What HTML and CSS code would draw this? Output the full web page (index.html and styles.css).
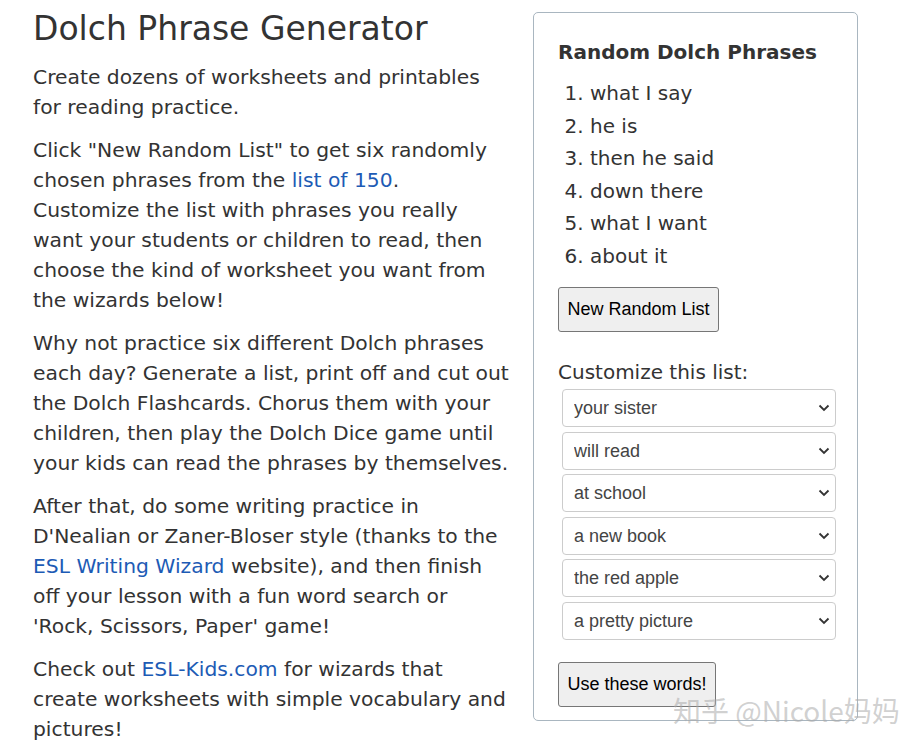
FILE: index.html
```html
<!DOCTYPE html>
<html lang="en">
<head>
<meta charset="utf-8">
<title>Dolch Phrase Generator</title>
<link rel="stylesheet" href="styles.css">
</head>
<body>
<div class="page">
  <div class="main">
    <h1 class="title">Dolch Phrase Generator</h1>
    <p class="para">Create dozens of worksheets and printables for reading practice.</p>
    <p class="para">Click "New Random List" to get six randomly chosen phrases from the <a class="link" href="#">list of 150</a>.<br>Customize the list with phrases you really want your students or children to read, then choose the kind of worksheet you want from the wizards below!</p>
    <p class="para">Why not practice six different Dolch phrases each day? Generate a list, print off and cut out the Dolch Flashcards. Chorus them with your children, then play the Dolch Dice game until your kids can read the phrases by themselves.</p>
    <p class="para">After that, do some writing practice in D'Nealian or Zaner-Bloser style (thanks to the <a class="link" href="#">ESL Writing Wizard</a> website), and then finish off your lesson with a fun word search or 'Rock, Scissors, Paper' game!</p>
    <p class="para">Check out <a class="link" href="#">ESL-Kids.com</a> for wizards that create worksheets with simple vocabulary and pictures!</p>
  </div>
  <div class="sidebar">
    <h2 class="side-title">Random Dolch Phrases</h2>
    <ol class="phrases">
      <li>what I say</li>
      <li>he is</li>
      <li>then he said</li>
      <li>down there</li>
      <li>what I want</li>
      <li>about it</li>
    </ol>
    <button class="btn btn-new" type="button">New Random List</button>
    <div class="custom-label">Customize this list:</div>
    <div class="selects">
      <div class="select-wrap"><select class="sel"><option>your sister</option></select><svg class="chev" width="12" height="8" viewBox="0 0 12 8"><path d="M1.5 1.5 L6 6 L10.5 1.5" fill="none" stroke="#333" stroke-width="1.8"/></svg></div>
      <div class="select-wrap"><select class="sel"><option>will read</option></select><svg class="chev" width="12" height="8" viewBox="0 0 12 8"><path d="M1.5 1.5 L6 6 L10.5 1.5" fill="none" stroke="#333" stroke-width="1.8"/></svg></div>
      <div class="select-wrap"><select class="sel"><option>at school</option></select><svg class="chev" width="12" height="8" viewBox="0 0 12 8"><path d="M1.5 1.5 L6 6 L10.5 1.5" fill="none" stroke="#333" stroke-width="1.8"/></svg></div>
      <div class="select-wrap"><select class="sel"><option>a new book</option></select><svg class="chev" width="12" height="8" viewBox="0 0 12 8"><path d="M1.5 1.5 L6 6 L10.5 1.5" fill="none" stroke="#333" stroke-width="1.8"/></svg></div>
      <div class="select-wrap"><select class="sel"><option>the red apple</option></select><svg class="chev" width="12" height="8" viewBox="0 0 12 8"><path d="M1.5 1.5 L6 6 L10.5 1.5" fill="none" stroke="#333" stroke-width="1.8"/></svg></div>
      <div class="select-wrap"><select class="sel"><option>a pretty picture</option></select><svg class="chev" width="12" height="8" viewBox="0 0 12 8"><path d="M1.5 1.5 L6 6 L10.5 1.5" fill="none" stroke="#333" stroke-width="1.8"/></svg></div>
    </div>
    <button class="btn btn-use" type="button">Use these words!</button>
  </div>
</div>
<div class="watermark">知乎 @Nicole妈妈</div>
</body>
</html>
```

FILE: styles.css
```css
html, body {
  margin: 0;
  padding: 0;
  background: #ffffff;
}
body {
  font-family: "DejaVu Sans", Verdana, sans-serif;
  color: #333333;
  position: relative;
  height: 749px;
  overflow: hidden;
}
.page {
  display: flex;
  align-items: flex-start;
  padding-left: 33px;
  gap: 22px;
}
.main {
  width: 478px;
  flex: none;
}
.title {
  font-size: 33px;
  font-weight: normal;
  line-height: 38px;
  margin: 10px 0 14px;
  color: #333333;
}
.para {
  font-size: 20.3px;
  line-height: 30px;
  margin: 0 0 13px;
}
.link {
  color: #1d5bb5;
  text-decoration: none;
}
.sidebar {
  flex: none;
  width: 275px;
  height: 681px;
  margin-top: 12px;
  border: 1px solid #a9b6c0;
  border-radius: 5px;
  padding: 26px 24px 0 24px;
  display: flex;
  flex-direction: column;
  align-items: flex-start;
}
.side-title {
  font-size: 20px;
  font-weight: bold;
  line-height: 26px;
  margin: 0 0 12px;
  color: #333333;
}
.phrases {
  margin: 0 0 15px;
  padding-left: 32px;
  font-size: 20px;
  line-height: 32.5px;
}
.btn {
  font-family: "Liberation Sans", Arial, sans-serif;
  font-size: 18px;
  color: #000000;
  background: #efefef;
  border: 1px solid #767676;
  border-radius: 3px;
  height: 45px;
  padding: 0 8.5px;
}
.custom-label {
  font-size: 20px;
  line-height: 30px;
  margin-top: 25px;
}
.selects {
  display: flex;
  flex-direction: column;
  gap: 4.6px;
  margin: 2px 0 0 4px;
}
.select-wrap {
  position: relative;
  width: 274px;
  height: 38px;
}
.sel {
  appearance: none;
  -webkit-appearance: none;
  width: 274px;
  height: 38px;
  border: 1px solid #cccccc;
  border-radius: 4px;
  background: #ffffff;
  padding: 0 11px;
  font-family: "Liberation Sans", Arial, sans-serif;
  font-size: 18px;
  color: #444444;
}
.chev {
  position: absolute;
  right: 6px;
  top: 15px;
  pointer-events: none;
}
.btn-use {
  margin-top: 22px;
}
.watermark {
  position: absolute;
  left: 673px;
  top: 692px;
  font-family: "Noto Sans CJK SC", "DejaVu Sans", sans-serif;
  font-size: 28px;
  line-height: 36px;
  color: rgba(170, 170, 170, 0.55);
  white-space: nowrap;
}
```
